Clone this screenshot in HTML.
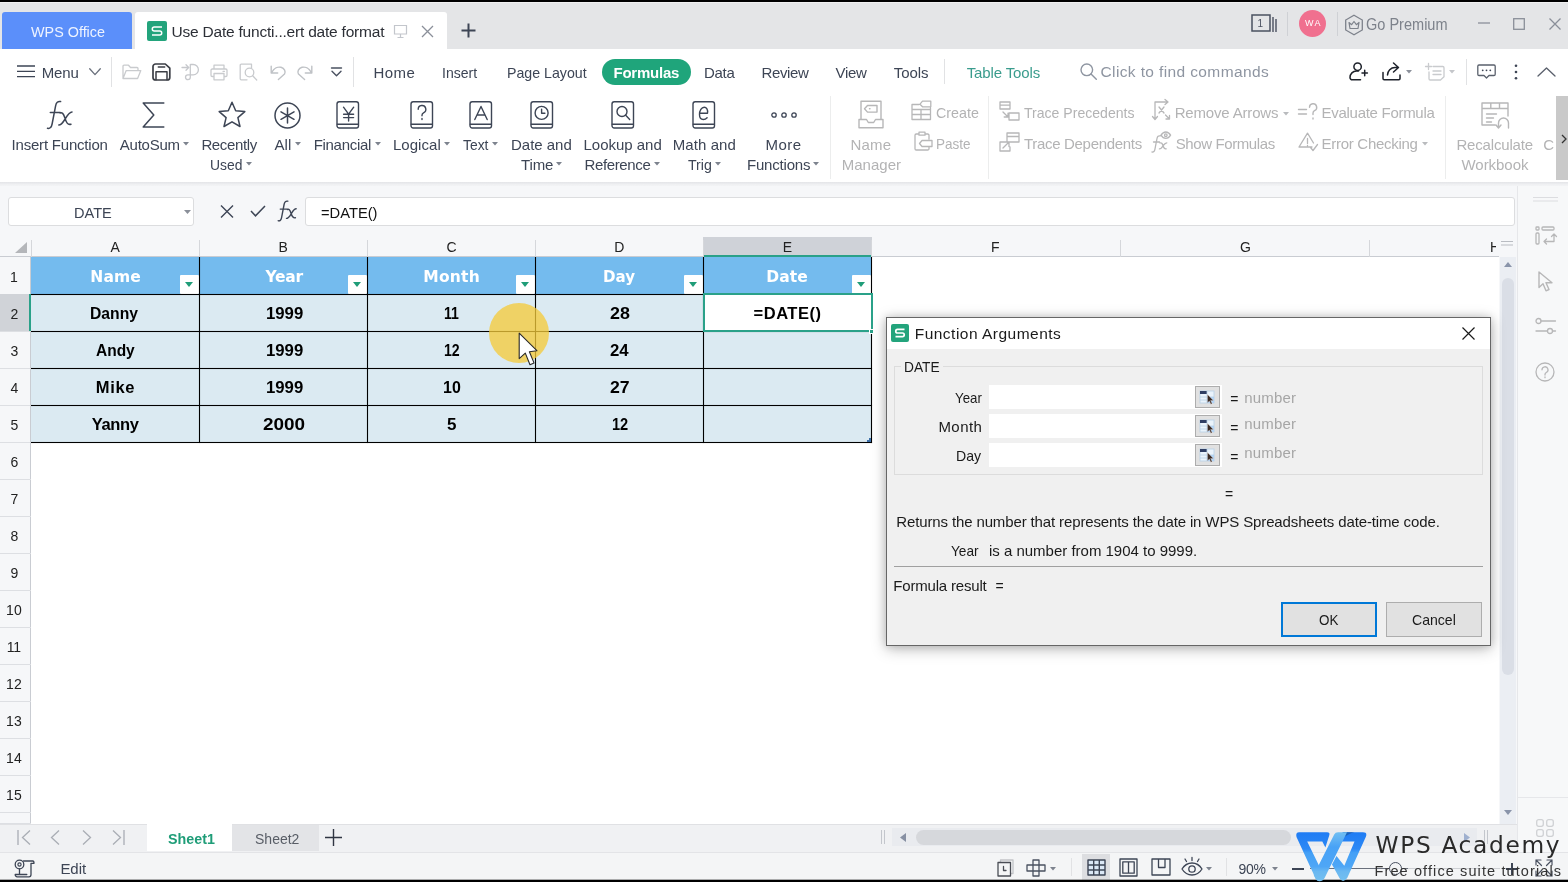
<!DOCTYPE html>
<html lang="en">
<head>
<meta charset="utf-8">
<title>Use Date function to convert date format - WPS Spreadsheets</title>
<style>
*{box-sizing:border-box;margin:0;padding:0}
html,body{width:1568px;height:882px;overflow:hidden;background:#fff}
body{position:relative;will-change:transform;font-family:"Liberation Sans",sans-serif;color:#3d4555}
.a{position:absolute}
.t{position:absolute;white-space:nowrap;line-height:1}
.b{font-weight:bold}
svg{position:absolute;overflow:visible}
.ico{fill:none;stroke:#3d4555;stroke-width:1.3;stroke-linecap:round;stroke-linejoin:round}
.dis{fill:none;stroke:#b7b7b8;stroke-width:1.3;stroke-linecap:round;stroke-linejoin:round}
.arr{fill:#7d838e;stroke:none}
.arrd{fill:#b9bbbe;stroke:none}
.cellhd{position:absolute;top:257px;height:37px;background:#74bbee}
.cell{position:absolute;height:37px;background:#dbeaf2}
.vl{position:absolute;width:1px;background:#000;top:257px;height:186px;box-shadow:0 0 1px rgba(0,0,0,.5)}
.hl{position:absolute;height:1px;background:#000;left:31px;width:841px;box-shadow:0 0 1px rgba(0,0,0,.4)}
.flt{position:absolute;top:275px;width:19px;height:19px;background:#fff;border-radius:1px}
.flt:after{content:"";position:absolute;left:5px;top:7px;border-left:4.5px solid transparent;border-right:4.5px solid transparent;border-top:5.5px solid #1f9d78}
.rh{position:absolute;left:0;width:31px;height:37px;border-bottom:1px solid #dddfe3}
.inp{position:absolute;left:989px;width:233px;height:24px;background:#fff}
.pick{position:absolute;left:1195px;width:25px;height:22px;background:#e1e1e1;border:1px solid #adadad}
.btn{position:absolute;top:602px;height:35px;background:#e1e1e1;border:1px solid #adadad}
</style>
</head>
<body>
<!-- ===== window title / tab strip ===== -->
<header class="a" style="left:0;top:0;width:1568px;height:49px;background:#e4e5e7">
  <div class="a" style="left:0;top:0;width:1568px;height:2px;background:#000"></div>
  <div class="a" style="left:0;top:2px;width:1568px;height:1px;background:#f0f0f1"></div>
  <div class="a" style="left:2px;top:12px;width:130px;height:37px;background:#5b8ffa;border-radius:3px 3px 0 0"></div>
  <div class="a" style="left:135px;top:12px;width:312px;height:37px;background:#fff;border-radius:3px 3px 0 0"></div>
  <!-- spreadsheet doc icon -->
  <div class="a" style="left:147px;top:21px;width:20px;height:20px;background:#23a47c;border-radius:2px"></div>
  <svg style="left:147px;top:21px" width="20" height="20" viewBox="0 0 20 20"><path d="M15 6H7.3a2 2 0 0 0 0 4h5.4a2 2 0 0 1 0 4H5" fill="none" stroke="#fff" stroke-width="1.500"/></svg>
  <!-- monitor, close, plus -->
  <svg style="left:393px;top:24px" width="15" height="15" viewBox="0 0 15 15"><path d="M1.5 1.5h12v8.5h-12zM7.5 10v3M4.5 13.5h6" fill="none" stroke="#c3c6cc" stroke-width="1.2"/></svg>
  <svg style="left:421px;top:25px" width="13" height="13" viewBox="0 0 13 13"><path d="M1 1l11 11M12 1L1 12" fill="none" stroke="#8a8f99" stroke-width="1.3"/></svg>
  <svg style="left:461px;top:23px" width="15" height="15" viewBox="0 0 15 15"><path d="M7.5 0.5v14M0.5 7.5h14" fill="none" stroke="#3d4555" stroke-width="2"/></svg>
  <!-- right controls -->
  <svg style="left:1251px;top:14px" width="27" height="19" viewBox="0 0 27 19"><rect x="1" y="1" width="18" height="16" fill="none" stroke="#4a5160" stroke-width="1.5"/><path d="M22 3v15M25 5v13" stroke="#4a5160" stroke-width="1.4" fill="none"/></svg>
  <div class="a" style="left:1287px;top:12px;width:1px;height:24px;background:#cfd1d5"></div>
  <div class="a" style="left:1299px;top:10px;width:27px;height:27px;border-radius:50%;background:#f0708f"></div>
  <div class="a" style="left:1337px;top:12px;width:1px;height:24px;background:#cfd1d5"></div>
  <svg style="left:1344px;top:14px" width="20" height="22" viewBox="0 0 20 22"><path d="M10 1.2l8.3 4.8v10L10 20.8 1.7 16V6z" fill="none" stroke="#7d828b" stroke-width="1.3"/><path d="M5 8.5l2.6 2.2L10 7.5l2.4 3.2L15 8.5l-1 6H6z" fill="none" stroke="#7d828b" stroke-width="1.2" stroke-linejoin="round"/></svg>
  <svg style="left:1478px;top:22px" width="12" height="2" viewBox="0 0 12 2"><path d="M0 1h12" stroke="#8a8f99" stroke-width="1.3"/></svg>
  <svg style="left:1513px;top:18px" width="12" height="12" viewBox="0 0 12 12"><rect x=".7" y=".7" width="10.6" height="10.6" fill="none" stroke="#8a8f99" stroke-width="1.3"/></svg>
  <svg style="left:1549px;top:18px" width="12" height="12" viewBox="0 0 12 12"><path d="M0.5 0.5l11 11M11.5 0.5l-11 11" fill="none" stroke="#8a8f99" stroke-width="1.3"/></svg>
</header>

<!-- ===== menu / quick access row ===== -->
<nav class="a" style="left:0;top:49px;width:1568px;height:46px;background:#fff">
  <svg style="left:17px;top:16px" width="18" height="13" viewBox="0 0 18 13"><path d="M0 1h18M0 6.3h18M0 11.6h18" stroke="#3d4555" stroke-width="1.3" fill="none"/></svg>
  <svg style="left:89px;top:19px" width="12" height="8" viewBox="0 0 12 8"><path d="M0.7 0.8L6 6.6 11.3 0.8" class="ico" style="stroke:#6a707c"/></svg>
  <div class="a" style="left:111px;top:8px;width:1px;height:30px;background:#e1e2e4"></div>
  <!-- open (disabled) -->
  <svg style="left:122px;top:15px" width="20" height="16" viewBox="0 0 20 16"><path d="M1 14.5V2.2a1 1 0 0 1 1-1h4.5l2 2.3H15a1 1 0 0 1 1 1V6M1 14.5L4.2 6.6h14.6L15.6 14.5z" class="dis" style="stroke:#c9cbce"/></svg>
  <!-- save -->
  <svg style="left:152px;top:14px" width="19" height="18" viewBox="0 0 19 18"><path d="M1 3.600A2.600 2.600 0 0 1 3.600 1h9.700L17.800 5.200v9.200a2.600 2.600 0 0 1-2.600 2.600H3.600A2.600 2.600 0 0 1 1 14.400z" class="ico" style="stroke:#3b3e45;stroke-width:1.700"/><path d="M4 16.800V8.700h11v8.100M6.300 4h6.400" class="ico" style="stroke:#3b3e45;stroke-width:1.500"/></svg>
  <!-- export pdf (disabled) -->
  <svg style="left:181px;top:14px" width="19" height="19" viewBox="0 0 19 19"><path d="M1 4.500h6.500M5 1.800l2.700 2.700L5 7.200M9.300 1.500V14.300a2.400 2.400 0 1 1-2.400-2.400h5.300a5.200 5.200 0 0 0 0-10.400H10" class="dis" style="stroke:#c6c8cc"/></svg>
  <!-- print (disabled) -->
  <svg style="left:210px;top:15px" width="18" height="17" viewBox="0 0 18 17"><path d="M4 5V1.200h10V5M4 12.500H2.200A1.200 1.200 0 0 1 1 11.300V6.200A1.200 1.200 0 0 1 2.200 5h13.600A1.200 1.200 0 0 1 17 6.200v5.100a1.200 1.200 0 0 1-1.200 1.200H14M4 9.500h10v6.300H4zM13 7.300h1.500" class="dis" style="stroke:#c9cbce"/></svg>
  <!-- preview (disabled) -->
  <svg style="left:239px;top:14px" width="19" height="19" viewBox="0 0 19 19"><path d="M12.500 1.200H2.200a1 1 0 0 0-1 1v13.600a1 1 0 0 0 1 1H8M12.500 1.200V5" class="dis" style="stroke:#c9cbce"/><circle cx="10.500" cy="9.500" r="4.300" class="dis" style="stroke:#c9cbce"/><path d="M13.700 12.800l4 4.200" class="dis" style="stroke:#c9cbce"/></svg>
  <!-- undo / redo (disabled) -->
  <svg style="left:270px;top:16px" width="16" height="16" viewBox="0 0 16 16"><path d="M1.200 1.300V8h6.500M1.600 7.600C4 3 8 1.500 11 2.300c3.500 1 5 4.200 3.500 6.800L8.400 14.500" class="dis" style="stroke:#bfc2c6;stroke-width:1.400"/></svg>
  <svg style="left:297px;top:16px" width="16" height="16" viewBox="0 0 16 16"><path d="M14.800 1.300V8H8.300M14.400 7.600C12 3 8 1.500 5 2.300c-3.500 1-5 4.200-3.500 6.800L7.600 14.500" class="dis" style="stroke:#bfc2c6;stroke-width:1.400"/></svg>
  <svg style="left:331px;top:18px" width="11" height="10" viewBox="0 0 11 10"><path d="M0.500 1h10M1 4.300l4.500 4.500L10 4.300" class="ico" style="stroke:#4a5160;stroke-width:1.400"/></svg>
  <div class="a" style="left:353px;top:8px;width:1px;height:30px;background:#e1e2e4"></div>
  <!-- active tab pill -->
  <div class="a" style="left:602px;top:10px;width:89px;height:26px;border-radius:13px;background:#1fa57b"></div>
  <div class="a" style="left:944px;top:10px;width:1px;height:25px;background:#e1e2e4"></div>
  <!-- search -->
  <svg style="left:1080px;top:14px" width="17" height="17" viewBox="0 0 17 17"><circle cx="6.800" cy="6.800" r="5.800" class="ico" style="stroke:#8e95a1;stroke-width:1.400"/><path d="M11 11l5.300 5.300" class="ico" style="stroke:#8e95a1;stroke-width:1.400"/></svg>
  <!-- add collaborator -->
  <svg style="left:1349px;top:13px" width="20" height="19" viewBox="0 0 20 19"><circle cx="8.6" cy="4.7" r="3.7" class="ico" style="stroke:#1d212a;stroke-width:1.5"/><path d="M11.5 17.8H3.300A2.300 2.300 0 0 1 1 15.500 6.500 6.500 0 0 1 7.500 9h2M15.700 8.300v5.400M13 11h5.400" class="ico" style="stroke:#1d212a;stroke-width:1.5"/></svg>
  <!-- share -->
  <svg style="left:1382px;top:13px" width="20" height="19" viewBox="0 0 20 19"><path d="M1 10.500v6a1.200 1.200 0 0 0 1.200 1.200h14.600a1.200 1.200 0 0 0 1.200-1.200V13M11.500 1l5 4.500-5 4.500M16 5.500h-3A7.500 7.500 0 0 0 5.500 13" class="ico" style="stroke:#1d212a;stroke-width:1.500"/></svg>
  <svg style="left:1406px;top:21px" width="6" height="4" viewBox="0 0 6 4"><path d="M0 0h6L3 3.500z" fill="#8c919b"/></svg>
  <!-- note (disabled) -->
  <svg style="left:1425px;top:14px" width="20" height="18" viewBox="0 0 20 18"><path d="M3.500 0.500v6M0.500 3.500h6M8 3.500h9.800a1.200 1.200 0 0 1 1.200 1.200v9l-3.500 3.300H5.200A1.200 1.200 0 0 1 4 15.800V9M8 8h8M8 11.500h8" class="dis" style="stroke:#c9cbce"/></svg>
  <svg style="left:1449px;top:21px" width="6" height="4" viewBox="0 0 6 4"><path d="M0 0h6L3 3.500z" fill="#c4c6ca"/></svg>
  <div class="a" style="left:1466px;top:10px;width:1px;height:26px;background:#e1e2e4"></div>
  <!-- comments -->
  <svg style="left:1477px;top:15px" width="19" height="16" viewBox="0 0 19 16"><path d="M2 1h15a1.200 1.200 0 0 1 1.200 1.200v8.100A1.200 1.200 0 0 1 17 11.500h-5L9.500 14 7 11.500H2a1.200 1.200 0 0 1-1.200-1.200V2.200A1.200 1.200 0 0 1 2 1z" class="ico" style="stroke:#5a606c;stroke-width:1.3"/><circle cx="5.700" cy="6.300" r=".9" fill="#3d4555"/><circle cx="9.500" cy="6.300" r=".9" fill="#3d4555"/><circle cx="13.300" cy="6.300" r=".9" fill="#3d4555"/></svg>
  <svg style="left:1514px;top:15px" width="4" height="16" viewBox="0 0 4 16"><circle cx="2" cy="1.800" r="1.300" fill="#3d4555"/><circle cx="2" cy="8" r="1.300" fill="#3d4555"/><circle cx="2" cy="14.200" r="1.300" fill="#3d4555"/></svg>
  <svg style="left:1537px;top:18px" width="19" height="10" viewBox="0 0 19 10"><path d="M1 9l8.500-8L18 9" class="ico" style="stroke:#5a606c;stroke-width:1.3"/></svg>
</nav>
<!-- ===== Formulas ribbon ===== -->
<section class="a" style="left:0;top:95px;width:1568px;height:87px;background:#fff">
  <!-- fx icon: drawn as svg strokes -->
  <svg style="left:46px;top:5px" width="27" height="30" viewBox="0 0 27 30"><path d="M1.500 28.300c2.600.6 4-1.200 4.600-4.300L9.600 5.800C10.200 2.600 11.800 1 14.600 1.600M4.300 12.400h10M14 13c2-.9 3.400.2 4.800 4.800 1.500 4.800 2.800 7.300 6.200 6.400M26 12c-2.600 0-4.200 2.600-6.600 6.500-2.300 3.700-3.800 6.600-6.600 6.600" class="ico" style="stroke-width:1.500"/></svg>
  <!-- sigma -->
  <svg style="left:142px;top:7px" width="23" height="26" viewBox="0 0 23 26"><path d="M21.800 1H1.200l10.600 12L1.200 25h20.600" class="ico" style="stroke-width:1.500"/></svg>
  <!-- star -->
  <svg style="left:218px;top:6px" width="28" height="27" viewBox="0 0 28 27"><path d="M14 1.300l3.700 8.400 9.100.9-6.900 6 2.100 8.900L14 20.800 6 25.500l2.100-8.900-6.900-6 9.100-.9z" class="ico" style="stroke-width:1.500"/></svg>
  <!-- all -->
  <svg style="left:274px;top:7px" width="27" height="27" viewBox="0 0 27 27"><circle cx="13.500" cy="13.500" r="12.500" class="ico" style="stroke-width:1.500"/><path d="M13.500 6v15M7 9.800l13 7.500M20 9.800L7 17.300" class="ico" style="stroke-width:1.500"/></svg>
  <!-- book icons -->
  <svg style="left:336px;top:5px" width="24" height="29" viewBox="0 0 24 29"><rect x="1" y="1.7" width="21.5" height="26.3" rx="2.2" class="ico" style="stroke-width:1.4"/><path d="M1.3 24.3h21" class="ico" style="stroke-width:1.4"/><path d="M7.5 7.2l5.1 7 5.1-7M12.6 14.2V21M7.6 14.3h10M7.6 17.6h10" class="ico" style="stroke-width:1.4"/></svg>
  <svg style="left:410px;top:5px" width="24" height="29" viewBox="0 0 24 29"><rect x="1" y="1.7" width="21.5" height="26.3" rx="2.2" class="ico" style="stroke-width:1.4"/><path d="M1.3 24.3h21" class="ico" style="stroke-width:1.4"/><path d="M8.200 9.300a3.800 3.800 0 1 1 5.300 3.500c-1 .5-1.500 1.300-1.500 2.400v.6M12 18.500v1" class="ico" style="stroke-width:1.400"/></svg>
  <svg style="left:469px;top:5px" width="24" height="29" viewBox="0 0 24 29"><rect x="1" y="1.7" width="21.5" height="26.3" rx="2.2" class="ico" style="stroke-width:1.4"/><path d="M1.3 24.3h21" class="ico" style="stroke-width:1.4"/><path d="M5.800 19.500L12 6.500l6.200 13M8 15h8" class="ico" style="stroke-width:1.400"/></svg>
  <svg style="left:530px;top:5px" width="24" height="29" viewBox="0 0 24 29"><rect x="1" y="1.7" width="21.5" height="26.3" rx="2.2" class="ico" style="stroke-width:1.4"/><path d="M1.3 24.3h21" class="ico" style="stroke-width:1.4"/><circle cx="11.6" cy="12.9" r="6.5" class="ico" style="stroke-width:1.4"/><path d="M11.6 9.3v4h3.3" class="ico" style="stroke-width:1.4"/></svg>
  <svg style="left:611px;top:5px" width="24" height="29" viewBox="0 0 24 29"><rect x="1" y="1.7" width="21.5" height="26.3" rx="2.2" class="ico" style="stroke-width:1.4"/><path d="M1.3 24.3h21" class="ico" style="stroke-width:1.4"/><circle cx="11" cy="11.500" r="5" class="ico" style="stroke-width:1.400"/><path d="M14.700 15.200l4 4.300" class="ico" style="stroke-width:1.400"/></svg>
  <svg style="left:692px;top:5px" width="24" height="29" viewBox="0 0 24 29"><rect x="1" y="1.7" width="21.5" height="26.3" rx="2.2" class="ico" style="stroke-width:1.4"/><path d="M1.3 24.3h21" class="ico" style="stroke-width:1.4"/><path d="M8 13.200h7.500c.6-3.800-1-6-3.300-6-2.700 0-4.700 3.400-4.700 7.300 0 3.200 1.500 5 3.800 5 1.500 0 2.800-.7 3.800-1.800" class="ico" style="stroke-width:1.400"/></svg>
  <!-- more: three dots -->
  <svg style="left:771px;top:17px" width="26" height="6" viewBox="0 0 26 6"><circle cx="3" cy="3" r="2.200" class="ico"/><circle cx="13" cy="3" r="2.200" class="ico"/><circle cx="23" cy="3" r="2.200" class="ico"/></svg>
  <!-- drop arrows under labels (enabled) -->
  <svg style="left:183px;top:47px" width="6" height="4" viewBox="0 0 6 4"><path d="M0 0h6L3 3.600z" class="arr"/></svg>
  <svg style="left:246px;top:67px" width="6" height="4" viewBox="0 0 6 4"><path d="M0 0h6L3 3.600z" class="arr"/></svg>
  <svg style="left:295px;top:47px" width="6" height="4" viewBox="0 0 6 4"><path d="M0 0h6L3 3.600z" class="arr"/></svg>
  <svg style="left:375px;top:47px" width="6" height="4" viewBox="0 0 6 4"><path d="M0 0h6L3 3.600z" class="arr"/></svg>
  <svg style="left:444px;top:47px" width="6" height="4" viewBox="0 0 6 4"><path d="M0 0h6L3 3.600z" class="arr"/></svg>
  <svg style="left:492px;top:47px" width="6" height="4" viewBox="0 0 6 4"><path d="M0 0h6L3 3.600z" class="arr"/></svg>
  <svg style="left:556px;top:67px" width="6" height="4" viewBox="0 0 6 4"><path d="M0 0h6L3 3.600z" class="arr"/></svg>
  <svg style="left:654px;top:67px" width="6" height="4" viewBox="0 0 6 4"><path d="M0 0h6L3 3.600z" class="arr"/></svg>
  <svg style="left:715px;top:67px" width="6" height="4" viewBox="0 0 6 4"><path d="M0 0h6L3 3.600z" class="arr"/></svg>
  <svg style="left:813px;top:67px" width="6" height="4" viewBox="0 0 6 4"><path d="M0 0h6L3 3.600z" class="arr"/></svg>
  <div class="a" style="left:830px;top:1px;width:1px;height:83px;background:#eceded"></div>
  <!-- name manager (disabled) -->
  <svg style="left:858px;top:5px" width="26" height="29" viewBox="0 0 26 29"><path d="M3 19V1.200h20V19M1 19.500h7.500l1.800 3h5.400l1.800-3H25v8.300H1zM6.500 8.800L9.500 5.500h9.500v6.600H9.500zM11.500 8.800h.5" class="dis" style="stroke-width:1.400"/></svg>
  <!-- create (disabled) -->
  <svg style="left:911px;top:5px" width="21" height="21" viewBox="0 0 21 21"><path d="M8 4.500H1v15h18.500V8M1 9.500h18.500M1 14.500h18.500M10 9.500v10M9 4.200L11.500 1.200h8.300v5.600H11.500z" class="dis"/></svg>
  <!-- paste (disabled) -->
  <svg style="left:914px;top:36px" width="19" height="20" viewBox="0 0 19 20"><path d="M5 3H2.200A1.200 1.200 0 0 0 1 4.200v13.600A1.200 1.200 0 0 0 2.200 19h11.600a1.200 1.200 0 0 0 1.200-1.200V16M11 3h2.800A1.200 1.200 0 0 1 15 4.200V8M5 1.200h6v3H5zM5.500 12.500L8 9.500h10v6H8z" class="dis"/></svg>
  <div class="a" style="left:988px;top:1px;width:1px;height:83px;background:#eceded"></div>
  <!-- trace precedents / dependents (disabled) -->
  <svg style="left:999px;top:6px" width="21" height="20" viewBox="0 0 21 20"><path d="M1 1h10v7H1zM1 4.200h10M10 12h10v7H10zM4 11l5 5M9 12.200V16H5.200" class="dis"/></svg>
  <svg style="left:999px;top:37px" width="21" height="20" viewBox="0 0 21 20"><path d="M8 1h12v9H8zM8 4.500h12M5 10H1v9h10v-4M4 16l6-6M5.500 10H10v4.500" class="dis"/></svg>
  <!-- remove arrows / show formulas (disabled) -->
  <svg style="left:1151px;top:6px" width="20" height="20" viewBox="0 0 20 20"><path d="M4 1h13M14 -1.500l3 2.500-3 2.500M4 1v17M1.500 15.500L4 18.500l2.500-3M8 6l5 6M13 6l-5 6M14.500 14l4 4M18.500 14.500v3.500H15" class="dis"/></svg>
  <svg style="left:1151px;top:35px" width="20" height="23" viewBox="0 0 20 23"><path d="M1 22c1.600.4 2.500-.8 2.900-2.700L6 8.500c.4-2 1.400-3 3.200-2.600M2.500 12h6M9 13c1.500-.6 2.200.4 3 2.800.9 2.500 1.600 3.500 3.200 3M15.800 12.800c-1.600 0-2.500 1.300-3.700 3-1.200 1.800-2.100 3.100-3.700 3.100M10 5.200c1.200-2 2.800-3.200 4.800-3.200s3.600 1.200 4.800 3.200c-1.200 2-2.800 3.200-4.800 3.200S11.200 7.200 10 5.200z" class="dis"/><circle cx="14.800" cy="5.200" r="1.300" class="dis"/></svg>
  <svg style="left:1283px;top:17px" width="6" height="4" viewBox="0 0 6 4"><path d="M0 0h6L3 3.600z" class="arrd"/></svg>
  <!-- evaluate formula =? -->
  <svg style="left:1298px;top:8px" width="20" height="18" viewBox="0 0 20 18"><path d="M0.500 6.500h8M0.500 11h8M11.500 4.300a3.600 3.600 0 1 1 5 3.400c-1 .5-1.500 1.300-1.500 2.500v1.300M15 15v1" class="dis" style="stroke-width:1.400"/></svg>
  <!-- error checking -->
  <svg style="left:1298px;top:37px" width="21" height="20" viewBox="0 0 21 20"><path d="M14 15H1L9.500 1.200 15.500 11M9.500 6.500v5M9.500 13.300v.4M12.500 15.500l2.500 3 4.500-6" class="dis"/></svg>
  <svg style="left:1422px;top:47px" width="6" height="4" viewBox="0 0 6 4"><path d="M0 0h6L3 3.600z" class="arrd"/></svg>
  <div class="a" style="left:1445px;top:1px;width:1px;height:83px;background:#eceded"></div>
  <!-- recalculate workbook -->
  <svg style="left:1481px;top:7px" width="30" height="27" viewBox="0 0 30 27"><path d="M14 23H1V1h26v13M1 6.500h26M9.800 1v5.500M18.500 1v5.500M5.500 12h10M5.500 16h7M5.500 20h5M27.500 26v-5a5 5 0 0 0-10 0v4.500M15 23l2.500 3 2.500-3" class="dis" style="stroke-width:1.400"/></svg>
  <!-- ribbon overflow button -->
  <div class="a" style="left:1556px;top:1px;width:12px;height:84px;background:#c9c9c9"></div>
  <svg style="left:1561px;top:39px" width="6" height="10" viewBox="0 0 6 10"><path d="M1 1l4 4-4 4" fill="none" stroke="#333" stroke-width="1.300"/></svg>
</section>
<div class="a" style="left:0;top:182px;width:1568px;height:6px;background:linear-gradient(#e3e4e7,#f0f1f3 45%,#f6f7f9)"></div>
<!-- ===== formula bar ===== -->
<div class="a" style="left:0;top:186px;width:1517px;height:51px;background:#f6f7f9"></div>
<div class="a" style="left:8px;top:197px;width:186px;height:29px;background:#fff;border:1px solid #dcdddf;border-radius:3px"></div>
<svg style="left:184px;top:210px" width="7" height="4" viewBox="0 0 7 4"><path d="M0 0h7L3.500 4z" fill="#8a8f99"/></svg>
<svg style="left:220px;top:205px" width="14" height="13" viewBox="0 0 14 13"><path d="M1 .5l12 12M13 .5L1 12.500" fill="none" stroke="#3d4555" stroke-width="1.400"/></svg>
<svg style="left:250px;top:205px" width="16" height="12" viewBox="0 0 16 12"><path d="M1 6l4.500 4.800L15 1" fill="none" stroke="#3d4555" stroke-width="1.500"/></svg>
<svg style="left:277px;top:200px" width="20" height="22" viewBox="0 0 27 30"><path d="M1.500 28.300c2.600.6 4-1.200 4.600-4.300L9.600 5.800C10.200 2.600 11.800 1 14.600 1.600M4.300 12.400h10M14 13c2-.9 3.400.2 4.800 4.800 1.500 4.800 2.800 7.300 6.200 6.400M26 12c-2.600 0-4.200 2.600-6.600 6.500-2.300 3.700-3.800 6.600-6.600 6.600" class="ico" style="stroke-width:1.900"/></svg>
<div class="a" style="left:305px;top:197px;width:1210px;height:29px;background:#fff;border:1px solid #dcdddf;border-radius:3px"></div>
<!-- ===== sheet grid ===== -->
<main class="a" style="left:0;top:237px;width:1517px;height:587px;background:#fff">
</main>
<div class="a" style="left:0;top:237px;width:1499px;height:20px;background:#f6f7f9;border-bottom:1px solid #c9ccd2"></div>
<div class="a" style="left:703px;top:237px;width:169px;height:19px;background:#cfd2d8"></div>
<div class="a" style="left:703px;top:255px;width:169px;height:2px;background:#2aa189"></div>
<div class="a" style="left:31px;top:240px;width:1px;height:17px;background:#d5d7db"></div>
<div class="a" style="left:199px;top:240px;width:1px;height:17px;background:#d5d7db"></div>
<div class="a" style="left:367px;top:240px;width:1px;height:17px;background:#d5d7db"></div>
<div class="a" style="left:535px;top:240px;width:1px;height:17px;background:#d5d7db"></div>
<div class="a" style="left:703px;top:240px;width:1px;height:17px;background:#d5d7db"></div>
<div class="a" style="left:871px;top:240px;width:1px;height:17px;background:#d5d7db"></div>
<div class="a" style="left:1120px;top:240px;width:1px;height:17px;background:#d5d7db"></div>
<div class="a" style="left:1369px;top:240px;width:1px;height:17px;background:#d5d7db"></div>
<svg style="left:15px;top:242px" width="12" height="11" viewBox="0 0 12 11"><path d="M12 0v11H0z" fill="#b4b6ba"/></svg>
<div class="a" style="left:0;top:257px;width:31px;height:567px;background:#f6f7f9;border-right:1px solid #c9ccd2"></div>
<div class="rh" style="top:258px;height:37px"></div>
<div class="rh" style="top:295px;height:37px"></div>
<div class="a" style="left:0;top:294px;width:31px;height:37px;background:#d0d3d8;border-right:2px solid #2aa189"></div>
<div class="rh" style="top:332px;height:37px"></div>
<div class="rh" style="top:369px;height:37px"></div>
<div class="rh" style="top:406px;height:37px"></div>
<div class="rh" style="top:443px;height:37px"></div>
<div class="rh" style="top:480px;height:37px"></div>
<div class="rh" style="top:517px;height:37px"></div>
<div class="rh" style="top:554px;height:37px"></div>
<div class="rh" style="top:591px;height:37px"></div>
<div class="rh" style="top:628px;height:37px"></div>
<div class="rh" style="top:665px;height:37px"></div>
<div class="rh" style="top:702px;height:37px"></div>
<div class="rh" style="top:739px;height:37px"></div>
<div class="rh" style="top:776px;height:37px"></div>
<div class="rh" style="top:813px;height:11px"></div>
<div class="cellhd" style="left:31px;width:168px"></div>
<div class="cell" style="left:31px;top:294px;width:168px;height:148px"></div>
<div class="cellhd" style="left:199px;width:168px"></div>
<div class="cell" style="left:199px;top:294px;width:168px;height:148px"></div>
<div class="cellhd" style="left:367px;width:168px"></div>
<div class="cell" style="left:367px;top:294px;width:168px;height:148px"></div>
<div class="cellhd" style="left:535px;width:168px"></div>
<div class="cell" style="left:535px;top:294px;width:168px;height:148px"></div>
<div class="cellhd" style="left:703px;width:168px"></div>
<div class="cell" style="left:703px;top:294px;width:168px;height:148px"></div>
<div class="flt" style="left:180px"></div>
<div class="flt" style="left:348px"></div>
<div class="flt" style="left:516px"></div>
<div class="flt" style="left:684px"></div>
<div class="flt" style="left:852px"></div>
<div class="vl" style="left:199px"></div>
<div class="vl" style="left:367px"></div>
<div class="vl" style="left:535px"></div>
<div class="vl" style="left:703px"></div>
<div class="vl" style="left:871px"></div>
<div class="hl" style="top:294px"></div>
<div class="hl" style="top:331px"></div>
<div class="hl" style="top:368px"></div>
<div class="hl" style="top:405px"></div>
<div class="hl" style="top:442px"></div>
<div class="a" style="left:703px;top:293px;width:170px;height:39px;background:#fff;border:2px solid #2aa189"></div>
<div class="a" style="left:869px;top:329px;width:5px;height:5px;background:#2aa189;border:1px solid #fff"></div>
<div class="a" style="left:867px;top:438px;width:4px;height:4px;border-right:2px solid #3b6ea8;border-bottom:2px solid #3b6ea8"></div>
<div class="a" style="left:1488px;top:239px;width:8px;height:16px;overflow:hidden"><span class="t" style="left:2px;top:1px;font-size:14px;color:#222">H</span></div>
<!-- ===== vertical scrollbar ===== -->
<div class="a" style="left:1499px;top:237px;width:18px;height:587px;background:#f6f7f9"></div>
<div class="a" style="left:1500px;top:257px;width:16px;height:567px;background:#ebeef3"></div>
<div class="a" style="left:1502px;top:278px;width:12px;height:397px;background:#dadee6;border-radius:6px"></div>
<svg style="left:1504px;top:262px" width="8" height="5" viewBox="0 0 8 5"><path d="M0 5h8L4 0z" fill="#8a94aa"/></svg>
<svg style="left:1504px;top:810px" width="8" height="5" viewBox="0 0 8 5"><path d="M0 0h8L4 5z" fill="#8a94aa"/></svg>
<svg style="left:1501px;top:241px" width="12" height="5" viewBox="0 0 12 5"><path d="M0 .5h12M0 4h12" stroke="#b9bcc2" stroke-width="1"/></svg>
<!-- ===== task pane strip ===== -->
<aside class="a" style="left:1517px;top:186px;width:51px;height:666px;background:#f7f8f9;border-left:1px solid #e6e7ea">
  <svg style="left:15px;top:11px" width="25" height="5" viewBox="0 0 25 5"><path d="M0 .5h25M0 4h25" stroke="#dcdde0" stroke-width="1"/></svg>
  <svg style="left:17px;top:40px" width="21" height="20" viewBox="0 0 21 20"><rect x="1" y="1" width="3" height="3" rx=".8" class="dis"/><rect x="1" y="7" width="3" height="11" rx="1" class="dis"/><rect x="7" y="1" width="12" height="3" rx="1" class="dis"/><path d="M19 8v7.500H9M11.500 13l-2.500 2.500 2.500 2.500M16.500 10.500L19 8l2.500 2.500" class="dis"/></svg>
  <svg style="left:20px;top:85px" width="17" height="21" viewBox="0 0 17 21"><path d="M1 1v15.500l4-3.700 3 7 3-1.300-3-6.800h6z" class="dis" style="stroke-width:1.400"/></svg>
  <svg style="left:17px;top:131px" width="21" height="18" viewBox="0 0 21 18"><circle cx="3.500" cy="4" r="2.500" class="dis"/><path d="M6 4h14.500M1 14h11" class="dis"/><circle cx="15" cy="14" r="2.500" class="dis"/><path d="M17.500 14h3" class="dis"/></svg>
  <svg style="left:17px;top:176px" width="20" height="20" viewBox="0 0 20 20"><circle cx="10" cy="10" r="9" class="dis"/><path d="M7 7.800a3 3 0 1 1 4.300 2.700c-.9.500-1.300 1.100-1.300 2v.5M10 15v.7" class="dis"/></svg>
  <div class="a" style="left:0;top:611px;width:51px;height:1px;background:#e6e7ea"></div>
  <svg style="left:18px;top:633px" width="18" height="18" viewBox="0 0 18 18"><rect x=".7" y=".7" width="6.600" height="6.600" rx="2" class="dis" style="stroke:#cfd1d4"/><rect x="10.700" y=".7" width="6.600" height="6.600" rx="2" class="dis" style="stroke:#cfd1d4"/><rect x=".7" y="10.700" width="6.600" height="6.600" rx="2" class="dis" style="stroke:#cfd1d4"/><rect x="10.700" y="10.700" width="6.600" height="6.600" rx="2" class="dis" style="stroke:#cfd1d4"/></svg>
</aside>
<!-- ===== sheet tab bar ===== -->
<div class="a" style="left:0;top:824px;width:1517px;height:28px;background:#f0f1f3;border-top:1px solid #e0e1e4"></div>
<svg style="left:17px;top:830px" width="14" height="15" viewBox="0 0 14 15"><path d="M1 0v15M13 .5L5.500 7.500 13 14.500" fill="none" stroke="#a9adb4" stroke-width="1.300"/></svg>
<svg style="left:50px;top:830px" width="10" height="15" viewBox="0 0 10 15"><path d="M9 .5L1.500 7.500 9 14.500" fill="none" stroke="#a9adb4" stroke-width="1.300"/></svg>
<svg style="left:82px;top:830px" width="10" height="15" viewBox="0 0 10 15"><path d="M1 .5l7.500 7L1 14.500" fill="none" stroke="#a9adb4" stroke-width="1.300"/></svg>
<svg style="left:112px;top:830px" width="13" height="15" viewBox="0 0 13 15"><path d="M12 0v15M1 .5l7.500 7L1 14.500" fill="none" stroke="#a9adb4" stroke-width="1.300"/></svg>
<div class="a" style="left:147px;top:824px;width:85px;height:27px;background:#fff"></div>
<div class="a" style="left:232px;top:825px;width:87px;height:26px;background:#e3e4e7"></div>
<svg style="left:325px;top:829px" width="17" height="17" viewBox="0 0 17 17"><path d="M8.500 0v17M0 8.500h17" stroke="#2f3542" stroke-width="1.400"/></svg>
<!-- horizontal scrollbar -->
<svg style="left:881px;top:830px" width="4" height="14" viewBox="0 0 4 14"><path d="M.5 0v14M3.500 0v14" stroke="#c3c6cc" stroke-width="1"/></svg>
<div class="a" style="left:892px;top:828px;width:585px;height:18px;background:#e9ebef"></div>
<svg style="left:900px;top:833px" width="6" height="9" viewBox="0 0 6 9"><path d="M6 0v9L0 4.500z" fill="#8790a3"/></svg>
<div class="a" style="left:916px;top:830px;width:375px;height:15px;background:#d6d8dc;border-radius:7.500px"></div>
<svg style="left:1464px;top:833px" width="6" height="9" viewBox="0 0 6 9"><path d="M0 0v9l6-4.500z" fill="#9fb0cf"/></svg>
<svg style="left:1484px;top:830px" width="4" height="14" viewBox="0 0 4 14"><path d="M.5 0v14M3.500 0v14" stroke="#c3c6cc" stroke-width="1"/></svg>
<!-- ===== status bar ===== -->
<footer class="a" style="left:0;top:852px;width:1568px;height:28px;background:#f4f5f6;border-top:1px solid #e3e4e7">
  <svg style="left:14px;top:6px" width="21" height="19" viewBox="0 0 21 19"><circle cx="5.500" cy="5.500" r="4.300" class="ico" style="stroke-width:1.300"/><circle cx="5.500" cy="5.500" r="1.600" class="ico" style="stroke-width:1.200"/><path d="M9.500 2h9.300c1 0 1.200 1 1.200 2.300h-3v11.200c0 1.300-.8 2.300-2 2.300H3.200c-1.200 0-2-1-2-2.300h11.600M5.500 10v5" class="ico" style="stroke-width:1.300"/></svg>
  <svg style="left:997px;top:6px" width="17" height="18" viewBox="0 0 17 18"><path d="M3.5 3V1h12.500v13.500h-2" class="ico" style="stroke:#c2c4c8;stroke-width:1.300"/><path d="M1 3.500h12.500V17H1zM6.500 7.500v4H9" class="ico" style="stroke:#4a4d55;stroke-width:1.300"/></svg>
  <svg style="left:1026px;top:6px" width="20" height="18" viewBox="0 0 20 18"><path d="M7 1h6v16H7zM1 6h18v6H1z" class="ico" style="stroke:#4a5160;stroke-width:1.300"/></svg>
  <svg style="left:1050px;top:14px" width="6" height="4" viewBox="0 0 6 4"><path d="M0 0h6L3 3.600z" class="arr"/></svg>
  <div class="a" style="left:1071px;top:5px;width:1px;height:18px;background:#e1e2e4"></div>
  <div class="a" style="left:1082px;top:1px;width:28px;height:26px;background:#dddee1"></div>
  <svg style="left:1087px;top:6px" width="19" height="17" viewBox="0 0 19 17"><rect x="1" y="1" width="17" height="15" fill="#dbe8f6"/><path d="M1 1h17v15H1zM1 6h17M1 11h17M6.700 1v15M12.300 1v15" class="ico" style="stroke:#3d4555;stroke-width:1.400"/></svg>
  <svg style="left:1119px;top:5px" width="19" height="19" viewBox="0 0 19 19"><path d="M1 1h17v17H1zM3.800 3.800h11.400v11.400H3.800zM9.500 3.800v11.400" class="ico" style="stroke:#3d4555;stroke-width:1.300"/></svg>
  <svg style="left:1151px;top:5px" width="20" height="18" viewBox="0 0 20 18"><path d="M1 1h18v16H1zM7.500 1v8.500h6.500V1" class="ico" style="stroke:#3d4555;stroke-width:1.300"/></svg>
  <svg style="left:1181px;top:4px" width="22" height="20" viewBox="0 0 22 20"><path d="M1 12c2.500-4 6-6 10-6s7.500 2 10 6c-2.500 4-6 6-10 6s-7.500-2-10-6zM4 2l1.500 2.500M11 .5v3M18 2l-1.500 2.500" class="ico" style="stroke:#3d4555;stroke-width:1.300"/><circle cx="11" cy="12" r="3.200" class="ico" style="stroke:#3d4555;stroke-width:1.300"/></svg>
  <svg style="left:1206px;top:14px" width="6" height="4" viewBox="0 0 6 4"><path d="M0 0h6L3 3.600z" class="arr"/></svg>
  <div class="a" style="left:1226px;top:5px;width:1px;height:18px;background:#e1e2e4"></div>
  <svg style="left:1272px;top:14px" width="6" height="4" viewBox="0 0 6 4"><path d="M0 0h6L3 3.600z" class="arr"/></svg>
  <div class="a" style="left:1292px;top:15px;width:12px;height:2px;background:#3d4555"></div>
  <div class="a" style="left:1310px;top:15px;width:98px;height:1px;background:#6a707c"></div><div class="a" style="left:1408px;top:15px;width:92px;height:1px;background:#cfd1d5"></div>
  <div class="a" style="left:1389px;top:9px;width:13px;height:13px;border-radius:50%;border:1px solid #4a5160;background:#f4f5f6"></div>
  <div class="a" style="left:1506px;top:15px;width:12px;height:2px;background:#3d4555"></div>
  <div class="a" style="left:1511px;top:10px;width:2px;height:12px;background:#3d4555"></div>
  <svg style="left:1535px;top:6px" width="18" height="18" viewBox="0 0 18 18"><path d="M1 6V1h5M1 1l5.500 5.500M17 6V1h-5M17 1l-5.500 5.500M1 12v5h5M1 17l5.500-5.500M17 12v5h-5M17 17l-5.500-5.500" class="ico" style="stroke:#4a5160;stroke-width:1.200"/></svg>
</footer>
<div class="a" style="left:0;top:879px;width:1568px;height:1px;background:rgba(0,0,0,.3)"></div>
<div class="a" style="left:0;top:880px;width:1568px;height:2px;background:#000"></div>
<!-- ===== Function Arguments dialog ===== -->
<div class="a" style="left:886px;top:317px;width:605px;height:329px;background:#f0f0f0;border:1px solid #666;box-shadow:0 3px 14px rgba(0,0,0,.26),0 0 8px rgba(0,0,0,.14)">
  <div class="a" style="left:0;top:0;width:603px;height:31px;background:#fff"></div>
</div>
<div class="a" style="left:891px;top:324px;width:18px;height:18px;background:#23a47c;border-radius:2px"></div>
<svg style="left:891px;top:324px" width="18" height="18" viewBox="0 0 20 20"><path d="M15 6H7.300a2 2 0 0 0 0 4h5.400a2 2 0 0 1 0 4H5" fill="none" stroke="#fff" stroke-width="1.900"/></svg>
<svg style="left:1462px;top:327px" width="13" height="13" viewBox="0 0 13 13"><path d="M.5.500l12 12M12.500.500l-12 12" fill="none" stroke="#1a1a1a" stroke-width="1.200"/></svg>
<!-- group box -->
<div class="a" style="left:894px;top:366px;width:589px;height:109px;border:1px solid #dcdcdc"></div>
<div class="a" style="left:901px;top:360px;width:42px;height:14px;background:#f0f0f0"></div>
<div class="inp" style="top:385px"></div>
<div class="inp" style="top:414px"></div>
<div class="inp" style="top:443px"></div>
<div class="pick" style="top:386px"></div>
<div class="pick" style="top:415px"></div>
<div class="pick" style="top:444px"></div>
<svg style="left:1199px;top:390px" width="17" height="17" viewBox="0 0 17 17"><rect x="1" y="1" width="14" height="12" fill="#eaf3fb" stroke="#b7cfe6" stroke-width=".8"/><rect x="1" y="1" width="7" height="3" fill="#2f3e63"/><path d="M1 7h14M1 10h14M8 1v12" stroke="#b7cfe6" stroke-width=".8"/><rect x="8" y="7" width="7" height="6" fill="#a9d0f5" opacity=".8"/><path d="M8.5 4.500v8.200l1.900-1.700 1.500 3.200 1.200-.6-1.500-3.100h2.700z" fill="#3a2a22" stroke="#f3d9cf" stroke-width=".3"/></svg>
<svg style="left:1199px;top:419px" width="17" height="17" viewBox="0 0 17 17"><rect x="1" y="1" width="14" height="12" fill="#eaf3fb" stroke="#b7cfe6" stroke-width=".8"/><rect x="1" y="1" width="7" height="3" fill="#2f3e63"/><path d="M1 7h14M1 10h14M8 1v12" stroke="#b7cfe6" stroke-width=".8"/><rect x="8" y="7" width="7" height="6" fill="#a9d0f5" opacity=".8"/><path d="M8.5 4.500v8.200l1.900-1.700 1.500 3.200 1.200-.6-1.500-3.100h2.700z" fill="#3a2a22" stroke="#f3d9cf" stroke-width=".3"/></svg>
<svg style="left:1199px;top:448px" width="17" height="17" viewBox="0 0 17 17"><rect x="1" y="1" width="14" height="12" fill="#eaf3fb" stroke="#b7cfe6" stroke-width=".8"/><rect x="1" y="1" width="7" height="3" fill="#2f3e63"/><path d="M1 7h14M1 10h14M8 1v12" stroke="#b7cfe6" stroke-width=".8"/><rect x="8" y="7" width="7" height="6" fill="#a9d0f5" opacity=".8"/><path d="M8.5 4.500v8.200l1.900-1.700 1.500 3.200 1.200-.6-1.500-3.100h2.700z" fill="#3a2a22" stroke="#f3d9cf" stroke-width=".3"/></svg>
<div class="a" style="left:894px;top:566px;width:589px;height:1px;background:#a0a0a0"></div>
<div class="btn" style="left:1281px;width:96px;border:2px solid #0078d7"></div>
<div class="btn" style="left:1386px;width:96px"></div>
<!-- ===== text labels ===== -->
<span class="t" style="left:30.6px;top:24px;font-size:15.5px;transform:scaleX(0.927);transform-origin:0 0;color:#eef3ff">WPS Office</span>
<span class="t" style="left:171.5px;top:24px;font-size:15.5px;letter-spacing:-0.21px;color:#2c2f36">Use Date functi...ert date format</span>
<span class="t" style="left:1257.5px;top:19px;font-size:10px;color:#4a5160">1</span>
<span class="t" style="left:1304.9px;top:19px;font-size:9px;letter-spacing:1.44px;color:#fff">WA</span>
<span class="t" style="left:1365.5px;top:17px;font-size:16px;transform:scaleX(0.908);transform-origin:0 0;color:#7d828b">Go Premium</span>
<span class="t" style="left:41.7px;top:65px;font-size:15px;letter-spacing:-0.16px">Menu</span>
<span class="t" style="left:373.5px;top:65px;font-size:15px;letter-spacing:0.44px">Home</span>
<span class="t" style="left:441.56px;top:65px;font-size:15px;transform:scaleX(0.937);transform-origin:0 0">Insert</span>
<span class="t" style="left:506.55px;top:65px;font-size:15px;transform:scaleX(0.946);transform-origin:0 0">Page Layout</span>
<span class="t" style="left:613.5px;top:65px;font-size:15px;letter-spacing:-0.24px;color:#fff;font-weight:bold">Formulas</span>
<span class="t" style="left:704px;top:65px;font-size:15px;letter-spacing:-0.28px">Data</span>
<span class="t" style="left:761.5px;top:65px;font-size:15px;letter-spacing:-0.37px">Review</span>
<span class="t" style="left:835.5px;top:65px;font-size:15px;letter-spacing:-0.3px">View</span>
<span class="t" style="left:893.7px;top:65px;font-size:15px;letter-spacing:-0.05px">Tools</span>
<span class="t" style="left:966.7px;top:65px;font-size:15px;letter-spacing:-0.12px;color:#3a9c8d">Table Tools</span>
<span class="t" style="left:1100.5px;top:64px;font-size:15.5px;letter-spacing:0.38px;color:#8e95a1">Click to find commands</span>
<span class="t" style="left:11.6px;top:137px;font-size:15px;letter-spacing:-0.21px">Insert Function</span>
<span class="t" style="left:119.8px;top:137px;font-size:15px;letter-spacing:-0.23px">AutoSum</span>
<span class="t" style="left:201.4px;top:137px;font-size:15px;letter-spacing:-0.35px">Recently</span>
<span class="t" style="left:209.87px;top:157px;font-size:15px;transform:scaleX(0.927);transform-origin:0 0">Used</span>
<span class="t" style="left:274.5px;top:137px;font-size:15px;letter-spacing:0.08px">All</span>
<span class="t" style="left:313.7px;top:137px;font-size:15px;letter-spacing:-0.3px">Financial</span>
<span class="t" style="left:393px;top:137px;font-size:15px;letter-spacing:0.03px">Logical</span>
<span class="t" style="left:462.6px;top:137px;font-size:15px;transform:scaleX(0.924);transform-origin:0 0">Text</span>
<span class="t" style="left:511px;top:137px;font-size:15px;letter-spacing:-0.02px">Date and</span>
<span class="t" style="left:521px;top:157px;font-size:15px;letter-spacing:-0.14px">Time</span>
<span class="t" style="left:583.5px;top:137px;font-size:15px;letter-spacing:-0.02px">Lookup and</span>
<span class="t" style="left:584.5px;top:157px;font-size:15px;letter-spacing:-0.37px">Reference</span>
<span class="t" style="left:672.7px;top:137px;font-size:15px;letter-spacing:0.09px">Math and</span>
<span class="t" style="left:687.5px;top:157px;font-size:15px;transform:scaleX(0.943);transform-origin:0 0">Trig</span>
<span class="t" style="left:765.5px;top:137px;font-size:15px;letter-spacing:0.49px">More</span>
<span class="t" style="left:747px;top:157px;font-size:15px;letter-spacing:-0.19px">Functions</span>
<span class="t" style="left:850.4px;top:137px;font-size:15px;letter-spacing:0.24px;color:#b3b3b4">Name</span>
<span class="t" style="left:841.7px;top:157px;font-size:15px;letter-spacing:0.02px;color:#b3b3b4">Manager</span>
<span class="t" style="left:936px;top:105px;font-size:15px;transform:scaleX(0.953);transform-origin:0 0;color:#b3b3b4">Create</span>
<span class="t" style="left:935.6px;top:136px;font-size:15px;transform:scaleX(0.900);transform-origin:0 0;color:#b3b3b4">Paste</span>
<span class="t" style="left:1023.9px;top:105px;font-size:15px;transform:scaleX(0.938);transform-origin:0 0;color:#b3b3b4">Trace Precedents</span>
<span class="t" style="left:1023.9px;top:136px;font-size:15px;letter-spacing:-0.3px;color:#b3b3b4">Trace Dependents</span>
<span class="t" style="left:1174.7px;top:105px;font-size:15px;letter-spacing:-0.17px;color:#b3b3b4">Remove Arrows</span>
<span class="t" style="left:1175.7px;top:136px;font-size:15px;letter-spacing:-0.39px;color:#b3b3b4">Show Formulas</span>
<span class="t" style="left:1321.6px;top:105px;font-size:15px;letter-spacing:-0.29px;color:#b3b3b4">Evaluate Formula</span>
<span class="t" style="left:1321.6px;top:136px;font-size:15px;letter-spacing:-0.29px;color:#b3b3b4">Error Checking</span>
<span class="t" style="left:1456.4px;top:137px;font-size:15px;letter-spacing:-0.17px;color:#b3b3b4">Recalculate</span>
<span class="t" style="left:1461.5px;top:157px;font-size:15px;letter-spacing:-0.04px;color:#b3b3b4">Workbook</span>
<span class="t" style="left:1543.25px;top:137px;font-size:15px;color:#b3b3b4">C</span>
<span class="t" style="left:73.56px;top:205px;font-size:15.5px;transform:scaleX(0.940);transform-origin:0 0">DATE</span>
<span class="t" style="left:320.7px;top:205px;font-size:15.5px;transform:scaleX(0.948);transform-origin:0 0;color:#111">=DATE()</span>
<span class="t" style="left:110.5px;top:240px;font-size:14px;color:#222">A</span>
<span class="t" style="left:278.5px;top:240px;font-size:14px;color:#222">B</span>
<span class="t" style="left:446.5px;top:240px;font-size:14px;color:#222">C</span>
<span class="t" style="left:614.25px;top:240px;font-size:14px;color:#222">D</span>
<span class="t" style="left:782.75px;top:240px;font-size:14px;color:#222">E</span>
<span class="t" style="left:991px;top:240px;font-size:14px;color:#222">F</span>
<span class="t" style="left:1240px;top:240px;font-size:14px;color:#222">G</span>
<span class="t" style="left:90.3px;top:270px;font-size:15.5px;letter-spacing:0.14px;color:#fff;font-weight:bold;font-family:'DejaVu Sans',sans-serif">Name</span>
<span class="t" style="left:265.6px;top:270px;font-size:15.5px;letter-spacing:-0.32px;color:#fff;font-weight:bold;font-family:'DejaVu Sans',sans-serif">Year</span>
<span class="t" style="left:423.3px;top:270px;font-size:15.5px;letter-spacing:0.22px;color:#fff;font-weight:bold;font-family:'DejaVu Sans',sans-serif">Month</span>
<span class="t" style="left:603.03px;top:270px;font-size:15.5px;transform:scaleX(0.973);transform-origin:0 0;color:#fff;font-weight:bold;font-family:'DejaVu Sans',sans-serif">Day</span>
<span class="t" style="left:766.3px;top:270px;font-size:15.5px;letter-spacing:0.05px;color:#fff;font-weight:bold;font-family:'DejaVu Sans',sans-serif">Date</span>
<span class="t" style="left:90.05px;top:305px;font-size:16.5px;transform:scaleX(0.951);transform-origin:0 0;color:#000;font-weight:bold">Danny</span>
<span class="t" style="left:96px;top:342px;font-size:16.5px;transform:scaleX(0.939);transform-origin:0 0;color:#000;font-weight:bold">Andy</span>
<span class="t" style="left:95.7px;top:379px;font-size:16.5px;letter-spacing:0.7px;color:#000;font-weight:bold">Mike</span>
<span class="t" style="left:91.8px;top:416px;font-size:16.5px;letter-spacing:-0.36px;color:#000;font-weight:bold">Yanny</span>
<span class="t" style="left:266.02px;top:305px;font-size:17px;transform:scaleX(0.984);transform-origin:0 0;color:#000;font-weight:bold">1999</span>
<span class="t" style="left:266.02px;top:342px;font-size:17px;transform:scaleX(0.984);transform-origin:0 0;color:#000;font-weight:bold">1999</span>
<span class="t" style="left:266.02px;top:379px;font-size:17px;transform:scaleX(0.984);transform-origin:0 0;color:#000;font-weight:bold">1999</span>
<span class="t" style="left:262.6px;top:416px;font-size:17px;transform:scaleX(1.113);transform-origin:0 0;color:#000;font-weight:bold">2000</span>
<span class="t" style="left:444.17px;top:305px;font-size:17px;transform:scaleX(0.829);transform-origin:0 0;color:#000;font-weight:bold">11</span>
<span class="t" style="left:444.17px;top:342px;font-size:17px;transform:scaleX(0.831);transform-origin:0 0;color:#000;font-weight:bold">12</span>
<span class="t" style="left:443.36px;top:379px;font-size:17px;transform:scaleX(0.940);transform-origin:0 0;color:#000;font-weight:bold">10</span>
<span class="t" style="left:446.9px;top:416px;font-size:17px;color:#000;font-weight:bold">5</span>
<span class="t" style="left:610px;top:305px;font-size:17px;transform:scaleX(1.051);transform-origin:0 0;color:#000;font-weight:bold">28</span>
<span class="t" style="left:610px;top:342px;font-size:17px;transform:scaleX(0.987);transform-origin:0 0;color:#000;font-weight:bold">24</span>
<span class="t" style="left:610px;top:379px;font-size:17px;transform:scaleX(1.040);transform-origin:0 0;color:#000;font-weight:bold">27</span>
<span class="t" style="left:612.14px;top:416px;font-size:17px;transform:scaleX(0.859);transform-origin:0 0;color:#000;font-weight:bold">12</span>
<span class="t" style="left:753.6px;top:305px;font-size:16.5px;letter-spacing:0.51px;color:#000;font-weight:bold">=DATE()</span>
<span class="t" style="left:914.7px;top:326px;font-size:15.5px;letter-spacing:0.49px;color:#1a1a1a">Function Arguments</span>
<span class="t" style="left:903.78px;top:359px;font-size:15px;transform:scaleX(0.916);transform-origin:0 0;color:#1a1a1a">DATE</span>
<span class="t" style="left:954.8px;top:390px;font-size:15px;transform:scaleX(0.884);transform-origin:0 0;color:#1a1a1a">Year</span>
<span class="t" style="left:938.4px;top:419px;font-size:15px;letter-spacing:0.46px;color:#1a1a1a">Month</span>
<span class="t" style="left:956.06px;top:448px;font-size:15px;transform:scaleX(0.940);transform-origin:0 0;color:#1a1a1a">Day</span>
<span class="t" style="left:1230.3px;top:392px;font-size:14px;color:#1a1a1a">=</span>
<span class="t" style="left:1230.3px;top:421px;font-size:14px;color:#1a1a1a">=</span>
<span class="t" style="left:1230.3px;top:450px;font-size:14px;color:#1a1a1a">=</span>
<span class="t" style="left:1244.3px;top:390px;font-size:15px;letter-spacing:0.17px;color:#a6a6a6">number</span>
<span class="t" style="left:1244.3px;top:416px;font-size:15px;letter-spacing:0.17px;color:#a6a6a6">number</span>
<span class="t" style="left:1244.3px;top:445px;font-size:15px;letter-spacing:0.17px;color:#a6a6a6">number</span>
<span class="t" style="left:1225px;top:487px;font-size:14px;color:#1a1a1a">=</span>
<span class="t" style="left:896.3px;top:514px;font-size:15px;letter-spacing:-0.13px;color:#1a1a1a">Returns the number that represents the date in WPS Spreadsheets date-time code.</span>
<span class="t" style="left:951.4px;top:543px;font-size:15px;transform:scaleX(0.911);transform-origin:0 0;color:#1a1a1a">Year</span>
<span class="t" style="left:989px;top:543px;font-size:15px;letter-spacing:-0.01px;color:#1a1a1a">is a number from 1904 to 9999.</span>
<span class="t" style="left:893.3px;top:578px;font-size:15px;letter-spacing:-0.19px;color:#1a1a1a">Formula result</span>
<span class="t" style="left:995.6px;top:579px;font-size:14px;color:#1a1a1a">=</span>
<span class="t" style="left:1319.4px;top:612px;font-size:15px;transform:scaleX(0.895);transform-origin:0 0;color:#1a1a1a">OK</span>
<span class="t" style="left:1412px;top:612px;font-size:15px;transform:scaleX(0.938);transform-origin:0 0;color:#1a1a1a">Cancel</span>
<span class="t" style="left:167.5px;top:831px;font-size:15px;transform:scaleX(0.952);transform-origin:0 0;color:#1f9d78;font-weight:bold">Sheet1</span>
<span class="t" style="left:255.4px;top:831px;font-size:15px;transform:scaleX(0.934);transform-origin:0 0;color:#585d66">Sheet2</span>
<span class="t" style="left:60.4px;top:861px;font-size:15px;letter-spacing:-0.03px">Edit</span>
<span class="t" style="left:1238.4px;top:862px;font-size:14px;letter-spacing:-0.24px">90%</span>
<span class="t" style="left:1375.5px;top:833px;font-size:23.3px;letter-spacing:1.66px;color:#2a2a2a;font-family:'DejaVu Sans',sans-serif">WPS Academy</span>
<span class="t" style="left:1374.5px;top:864px;font-size:14.5px;letter-spacing:1.11px;color:#333">Free office suite tutorials</span>
<span class="t" style="left:10px;top:270px;font-size:14px;color:#222">1</span>
<span class="t" style="left:10.5px;top:307px;font-size:14px;color:#222">2</span>
<span class="t" style="left:10.5px;top:344px;font-size:14px;color:#222">3</span>
<span class="t" style="left:10.5px;top:381px;font-size:14px;color:#222">4</span>
<span class="t" style="left:10.5px;top:418px;font-size:14px;color:#222">5</span>
<span class="t" style="left:10.5px;top:455px;font-size:14px;color:#222">6</span>
<span class="t" style="left:10.5px;top:492px;font-size:14px;color:#222">7</span>
<span class="t" style="left:10.5px;top:529px;font-size:14px;color:#222">8</span>
<span class="t" style="left:10.5px;top:566px;font-size:14px;color:#222">9</span>
<span class="t" style="left:6.11px;top:603px;font-size:14px;color:#222">10</span>
<span class="t" style="left:6.63px;top:640px;font-size:14px;color:#222">11</span>
<span class="t" style="left:6.11px;top:677px;font-size:14px;color:#222">12</span>
<span class="t" style="left:6.11px;top:714px;font-size:14px;color:#222">13</span>
<span class="t" style="left:6.11px;top:751px;font-size:14px;color:#222">14</span>
<span class="t" style="left:6.11px;top:788px;font-size:14px;color:#222">15</span>
<!-- ===== WPS Academy watermark ===== -->
<svg style="left:1295.5px;top:831.9px" width="70.5" height="48.6" viewBox="0 0 70.5 48.6">
  <defs>
    <linearGradient id="wg" x1="0" y1="0" x2="0" y2="1"><stop offset="0" stop-color="#1f7cf4"/><stop offset=".34" stop-color="#2c88f5"/><stop offset=".42" stop-color="#44a0f6"/><stop offset=".7" stop-color="#4ea6f6"/><stop offset=".8" stop-color="#6ab8f1"/><stop offset="1" stop-color="#74c0f0"/></linearGradient>
    <linearGradient id="wb" x1="0" y1="0" x2="0" y2="1"><stop offset="0" stop-color="#70bef2"/><stop offset=".16" stop-color="#5db0f4"/><stop offset=".3" stop-color="#48a2f6"/><stop offset=".7" stop-color="#4ea6f6"/><stop offset=".8" stop-color="#6ab8f1"/><stop offset="1" stop-color="#74c0f0"/></linearGradient>
  </defs>
  <path d="M44.9 9.400L46.500.300H67Q71.400.300 70 4.400L51.200 46Q46.900 52 43.600 46.300L36 32.500 40.500 24.100 48.300 33.700 58.500 9.400z" fill="url(#wg)"/>
  <path d="M3.200.300H31Q34.400.300 33.200 3.600L29.400 15.600 26.300 9.400H11.200L23.100 33.700V49.300Q20.800 49 19.600 46.500L.500 5Q-.700.300 3.200.300z" fill="url(#wg)"/>
  <path d="M47 .300H58.500Q52.500 1.500 46.200 6.500z" fill="#1a5daf" opacity=".85"/>
  <path d="M38.200 2.600Q39.300.300 42 .300H51L28.600 46Q26.500 49.600 23.100 49.300 20.500 49 19.300 46.300L17.700 43z" fill="url(#wb)"/>
</svg>
<!-- ===== pointer highlight ===== -->
<div class="a" style="left:488.600px;top:302.700px;width:60.800px;height:60.800px;border-radius:50%;background:rgba(244,203,56,.76)"></div>
<svg style="left:518px;top:332px" width="21" height="35" viewBox="0 0 21 35"><path d="M1.200 1.100V26.600L7.300 21.100 12 32.700 16 30.900 11.400 19.700 18.900 18.700z" fill="#fff" stroke="#2a2a2a" stroke-width="1.100" stroke-linejoin="round"/></svg>
</body>
</html>
